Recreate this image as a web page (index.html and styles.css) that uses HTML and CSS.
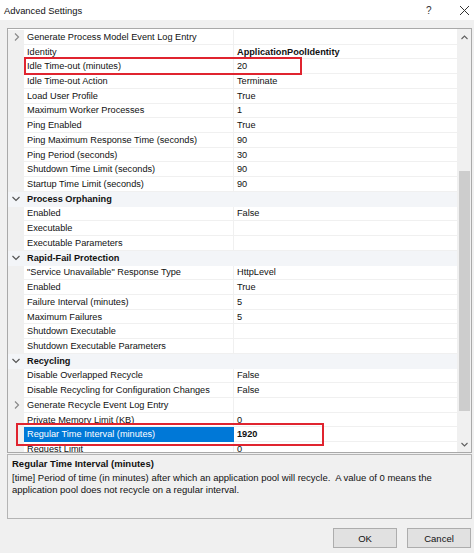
FILE: index.html
```html
<!DOCTYPE html>
<html>
<head>
<meta charset="utf-8">
<link rel="stylesheet" href="styles.css">
</head>
<body>
<div class="dialog">
  <div class="titlebar">
    <span class="title">Advanced Settings</span>
    <span class="help">?</span>
    <span class="close"><svg width="11" height="11" viewBox="0 0 11 11"><path d="M1 1 L10 10 M10 1 L1 10" stroke="#333" stroke-width="1" fill="none"/></svg></span>
  </div>
  <div class="grid">
    <div class="list">
      <div class="row"><div class="gutter"><svg class="chev-r" width="6" height="8" viewBox="0 0 6 8"><path d="M1 0.5 L4.5 4 L1 7.5" stroke="#8a8a8a" stroke-width="1.2" fill="none"/></svg></div><div class="name">Generate Process Model Event Log Entry</div><div class="value"></div></div>
      <div class="row"><div class="gutter"></div><div class="name">Identity</div><div class="value bold">ApplicationPoolIdentity</div></div>
      <div class="row"><div class="gutter"></div><div class="name">Idle Time-out (minutes)</div><div class="value">20</div></div>
      <div class="row"><div class="gutter"></div><div class="name">Idle Time-out Action</div><div class="value">Terminate</div></div>
      <div class="row"><div class="gutter"></div><div class="name">Load User Profile</div><div class="value">True</div></div>
      <div class="row"><div class="gutter"></div><div class="name">Maximum Worker Processes</div><div class="value">1</div></div>
      <div class="row"><div class="gutter"></div><div class="name">Ping Enabled</div><div class="value">True</div></div>
      <div class="row"><div class="gutter"></div><div class="name">Ping Maximum Response Time (seconds)</div><div class="value">90</div></div>
      <div class="row"><div class="gutter"></div><div class="name">Ping Period (seconds)</div><div class="value">30</div></div>
      <div class="row"><div class="gutter"></div><div class="name">Shutdown Time Limit (seconds)</div><div class="value">90</div></div>
      <div class="row"><div class="gutter"></div><div class="name">Startup Time Limit (seconds)</div><div class="value">90</div></div>
      <div class="row cat"><div class="gutter"><svg class="chev-d" width="8" height="6" viewBox="0 0 8 6"><path d="M0.5 1 L4 4.5 L7.5 1" stroke="#555" stroke-width="1.2" fill="none"/></svg></div><div class="name">Process Orphaning</div><div class="value"></div></div>
      <div class="row"><div class="gutter"></div><div class="name">Enabled</div><div class="value">False</div></div>
      <div class="row"><div class="gutter"></div><div class="name">Executable</div><div class="value"></div></div>
      <div class="row"><div class="gutter"></div><div class="name">Executable Parameters</div><div class="value"></div></div>
      <div class="row cat"><div class="gutter"><svg class="chev-d" width="8" height="6" viewBox="0 0 8 6"><path d="M0.5 1 L4 4.5 L7.5 1" stroke="#555" stroke-width="1.2" fill="none"/></svg></div><div class="name">Rapid-Fail Protection</div><div class="value"></div></div>
      <div class="row"><div class="gutter"></div><div class="name">"Service Unavailable" Response Type</div><div class="value">HttpLevel</div></div>
      <div class="row"><div class="gutter"></div><div class="name">Enabled</div><div class="value">True</div></div>
      <div class="row"><div class="gutter"></div><div class="name">Failure Interval (minutes)</div><div class="value">5</div></div>
      <div class="row"><div class="gutter"></div><div class="name">Maximum Failures</div><div class="value">5</div></div>
      <div class="row"><div class="gutter"></div><div class="name">Shutdown Executable</div><div class="value"></div></div>
      <div class="row"><div class="gutter"></div><div class="name">Shutdown Executable Parameters</div><div class="value"></div></div>
      <div class="row cat"><div class="gutter"><svg class="chev-d" width="8" height="6" viewBox="0 0 8 6"><path d="M0.5 1 L4 4.5 L7.5 1" stroke="#555" stroke-width="1.2" fill="none"/></svg></div><div class="name">Recycling</div><div class="value"></div></div>
      <div class="row"><div class="gutter"></div><div class="name">Disable Overlapped Recycle</div><div class="value">False</div></div>
      <div class="row"><div class="gutter"></div><div class="name">Disable Recycling for Configuration Changes</div><div class="value">False</div></div>
      <div class="row"><div class="gutter"><svg class="chev-r" width="6" height="8" viewBox="0 0 6 8"><path d="M1 0.5 L4.5 4 L1 7.5" stroke="#8a8a8a" stroke-width="1.2" fill="none"/></svg></div><div class="name">Generate Recycle Event Log Entry</div><div class="value"></div></div>
      <div class="row"><div class="gutter"></div><div class="name">Private Memory Limit (KB)</div><div class="value">0</div></div>
      <div class="row selected"><div class="gutter"></div><div class="name">Regular Time Interval (minutes)</div><div class="value bold">1920</div></div>
      <div class="row"><div class="gutter"></div><div class="name">Request Limit</div><div class="value">0</div></div>
      <div class="mark mark-idle"></div>
      <div class="mark mark-regular"></div>
    </div>
    <div class="scrollbar">
      <div class="sb-arrow"><svg width="7" height="5" viewBox="0 0 7 5"><path d="M0.5 4 L3.5 1 L6.5 4" stroke="#606060" stroke-width="1.1" fill="none"/></svg></div>
      <div class="track"><div class="thumb"></div></div>
      <div class="sb-arrow"><svg width="7" height="5" viewBox="0 0 7 5"><path d="M0.5 1 L3.5 4 L6.5 1" stroke="#606060" stroke-width="1.1" fill="none"/></svg></div>
    </div>
  </div>
  <div class="desc">
    <div class="desc-title">Regular Time Interval (minutes)</div>
    <div class="desc-text">[time] Period of time (in minutes) after which an application pool will recycle.&nbsp; A value of 0 means the<br>application pool does not recycle on a regular interval.</div>
  </div>
  <div class="buttons">
    <div class="btn">OK</div>
    <div class="btn">Cancel</div>
  </div>
</div>
</body>
</html>
```
FILE: styles.css
```css
html, body {
  margin: 0;
  padding: 0;
}
body {
  background: #f0f0f0;
  font-family: "Liberation Sans", Arial, sans-serif;
  font-size: 9.2px;
  color: #111111;
  width: 474px;
  height: 553px;
  overflow: hidden;
}
.dialog {
  display: flex;
  flex-direction: column;
  width: 474px;
  height: 553px;
}
.titlebar {
  height: 20px;
  background: #ffffff;
  display: flex;
  align-items: center;
  padding-left: 4px;
  font-size: 9.4px;
  color: #111;
}
.title {
  flex: 1;
}
.help {
  width: 10px;
  margin-right: 23px;
  font-size: 10px;
  color: #333;
}
.close {
  width: 11px;
  margin-right: 4px;
  display: flex;
  align-items: center;
}
.grid {
  margin-top: 8px;
  margin-left: 7px;
  width: 465px;
  height: 425px;
  box-sizing: border-box;
  border: 1px solid #a9a9a9;
  background: #ffffff;
  display: flex;
}
.list {
  position: relative;
  width: 450px;
  overflow: hidden;
  padding-top: 1px;
  box-sizing: border-box;
  background: #ffffff;
}
.row {
  display: flex;
  height: 14.72px;
  line-height: 14px;
}
.gutter {
  width: 16px;
  flex: none;
  background: #f0f0f0;
  display: flex;
  align-items: center;
  justify-content: center;
}
.chev-r {
  margin-left: 1px;
}
.name {
  width: 210px;
  flex: none;
  box-sizing: border-box;
  padding-left: 3px;
  border-bottom: 1px solid #f0f0f0;
  border-right: 1px solid #f0f0f0;
  white-space: nowrap;
  overflow: hidden;
  display: flex;
  align-items: center;
}
.value {
  width: 223px;
  flex: none;
  box-sizing: border-box;
  padding-left: 3px;
  border-bottom: 1px solid #f0f0f0;
  white-space: nowrap;
  overflow: hidden;
  display: flex;
  align-items: center;
}
.bold {
  font-weight: bold;
}
.cat .name,
.cat .value {
  background: #f3f5f8;
  font-weight: bold;
  border-color: #f3f5f8;
}
.cat .gutter {
  background: #f3f5f8;
}
.selected .name {
  background: #0078d7;
  color: #ffffff;
  border-color: #0078d7;
}
.mark {
  position: absolute;
  border: 2px solid #e0242f;
  box-sizing: border-box;
}
.mark-idle {
  left: 16px;
  top: 28px;
  width: 278px;
  height: 18px;
}
.mark-regular {
  left: 8px;
  top: 394px;
  width: 308px;
  height: 23px;
}
.scrollbar {
  width: 14px;
  background: #f0f0f0;
  display: flex;
  flex-direction: column;
}
.sb-arrow {
  height: 16px;
  display: flex;
  align-items: center;
  justify-content: center;
  padding-left: 1px;
}
.track {
  flex: 1;
  padding-top: 126px;
  padding-left: 2px;
  box-sizing: border-box;
}
.thumb {
  width: 11px;
  height: 240px;
  background: #cdcdcd;
}
.desc {
  margin-top: 1px;
  margin-left: 7px;
  width: 465px;
  height: 65px;
  box-sizing: border-box;
  border: 1px solid #b4b4b4;
  background: #f0f0f0;
  padding: 3px 0 0 4px;
  font-size: 9.5px;
}
.desc-title {
  font-weight: bold;
  line-height: 12px;
  margin-bottom: 2px;
}
.desc-text {
  line-height: 12px;
}
.buttons {
  display: flex;
  justify-content: flex-end;
  gap: 10px;
  margin-top: 9px;
  padding-right: 3px;
}
.btn {
  width: 64px;
  height: 20px;
  box-sizing: border-box;
  background: #e1e1e1;
  border: 1px solid #adadad;
  display: flex;
  align-items: center;
  justify-content: center;
  font-size: 9.5px;
}
```
